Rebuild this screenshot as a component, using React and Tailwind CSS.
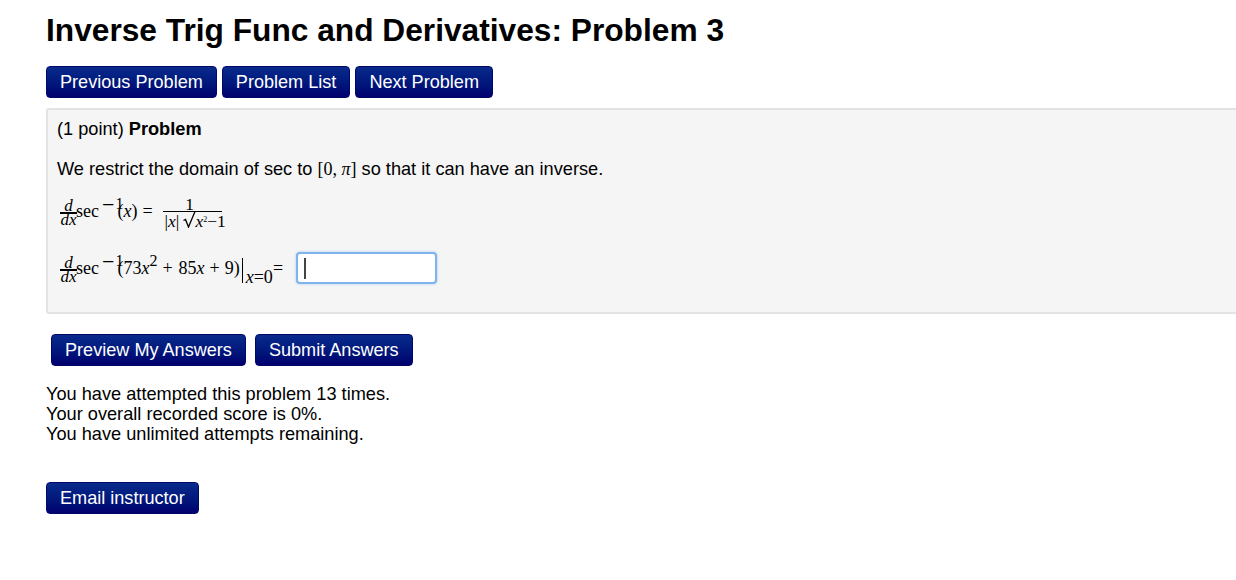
const btn =
  "h-8 rounded-[4px] border border-[#000a66] bg-gradient-to-b from-[#0a2a8c] to-[#00006e] px-[13px] text-[18.1px] leading-none text-white";

function DdxFrac() {
  return (
    <span className="ml-[3px] mt-[4px] inline-flex w-[17px] flex-col items-center text-[17px] italic leading-none">
      <span className="h-[12px] leading-[12px]">d</span>
      <span className="h-[1.5px] w-[17px] bg-black" />
      <span className="h-[12px] leading-[12px]">dx</span>
    </span>
  );
}

function Sec() {
  return (
    <>
      <span className="-ml-[1px]">sec</span>
      <span className="relative -top-[6px] ml-[3px] text-[22px] leading-none">−</span>
      <span className="relative -top-[7px] ml-[1px] w-[2px] text-[16px] leading-none">1</span>
    </>
  );
}

export default function App() {
  return (
    <div className="h-[580px] w-[1236px] overflow-hidden bg-white pl-[46px] font-['Liberation_Sans',Arial,sans-serif] text-[18.2px] text-black">
      <h1 className="pt-[11px] text-[31.7px] font-bold leading-[38px]">
        Inverse Trig Func and Derivatives: Problem 3
      </h1>

      <div className="mt-[17px] flex gap-[5px]">
        <button className={btn}>Previous Problem</button>
        <button className={btn}>Problem List</button>
        <button className={btn}>Next Problem</button>
      </div>

      <div className="mt-[10px] h-[206px] w-[1200px] rounded-[3px] border-2 border-[#e3e3e3] bg-[#f5f5f5] pl-[9px] pt-[9px]">
        <p className="leading-[20px]">
          (1 point) <b>Problem</b>
        </p>
        <p className="mt-[20px] leading-[20px]">
          We restrict the domain of sec to{" "}
          <span className="font-['Liberation_Serif',serif] text-[18px]">
            [0, <i>π</i>]
          </span>{" "}
          so that it can have an inverse.
        </p>

        <div className="mt-[14px] flex h-[36px] items-center font-['Liberation_Serif',serif] text-[18px] leading-none">
          <DdxFrac />
          <Sec />
          <span>
            (<i>x</i>)
          </span>
          <span className="ml-[5px]">=</span>
          <span className="ml-[10px] mt-[5px] inline-flex flex-col items-start text-[17.5px] leading-none">
            <span className="h-[13px] w-[59px] pr-[5px] text-center leading-[12px]">1</span>
            <span className="h-[1.5px] w-[59px] bg-black" />
            <span className="flex h-[17px] items-center pl-[2px] leading-[18px]">
              |<i>x</i>|
              <svg className="ml-[4px] -mt-[2px]" width="13" height="17" viewBox="0 0 13 17" fill="none" stroke="black">
                <path d="M0.5 9.5 L2.5 8.5 L5.5 16 L12 0.5" strokeWidth="1.3" />
              </svg>
              <i className="-ml-[1px]">x</i>
              <span className="relative -top-[1px] text-[8px]">2</span>
              <span>−1</span>
            </span>
          </span>
        </div>

        <div className="mt-[21px] flex h-[36px] items-center font-['Liberation_Serif',serif] text-[18px] leading-none">
          <DdxFrac />
          <Sec />
          <span>
            (73<i>x</i>
          </span>
          <span className="relative -top-[7px] text-[16px]">2</span>
          <span className="ml-[5px]">+</span>
          <span className="ml-[6px]">
            85<i>x</i>
          </span>
          <span className="ml-[5px]">+</span>
          <span className="ml-[5px]">9)</span>
          <span className="ml-[2px] mt-[4px] h-[25px] w-px bg-black" />
          <span className="relative top-[9px] ml-[3px] text-[18px]">
            <i>x</i>=0
          </span>
          <span className="-mt-[1px]">=</span>
          <span className="ml-[13px] flex h-[32px] w-[141px] items-center rounded-[4px] border-2 border-[#7fb3ea] bg-white pl-[6px] shadow-[0_0_3px_#a9cdf3]">
            <span className="h-[21px] w-[2px] bg-[#444]" />
          </span>
        </div>
      </div>

      <div className="ml-[5px] mt-[20px] flex gap-[9px]">
        <button className={btn}>Preview My Answers</button>
        <button className={btn}>Submit Answers</button>
      </div>

      <div className="mt-[18px] leading-[20px]">
        <p>You have attempted this problem 13 times.</p>
        <p>Your overall recorded score is 0%.</p>
        <p>You have unlimited attempts remaining.</p>
      </div>

      <button className={`${btn} mt-[38px]`}>Email instructor</button>
    </div>
  );
}
